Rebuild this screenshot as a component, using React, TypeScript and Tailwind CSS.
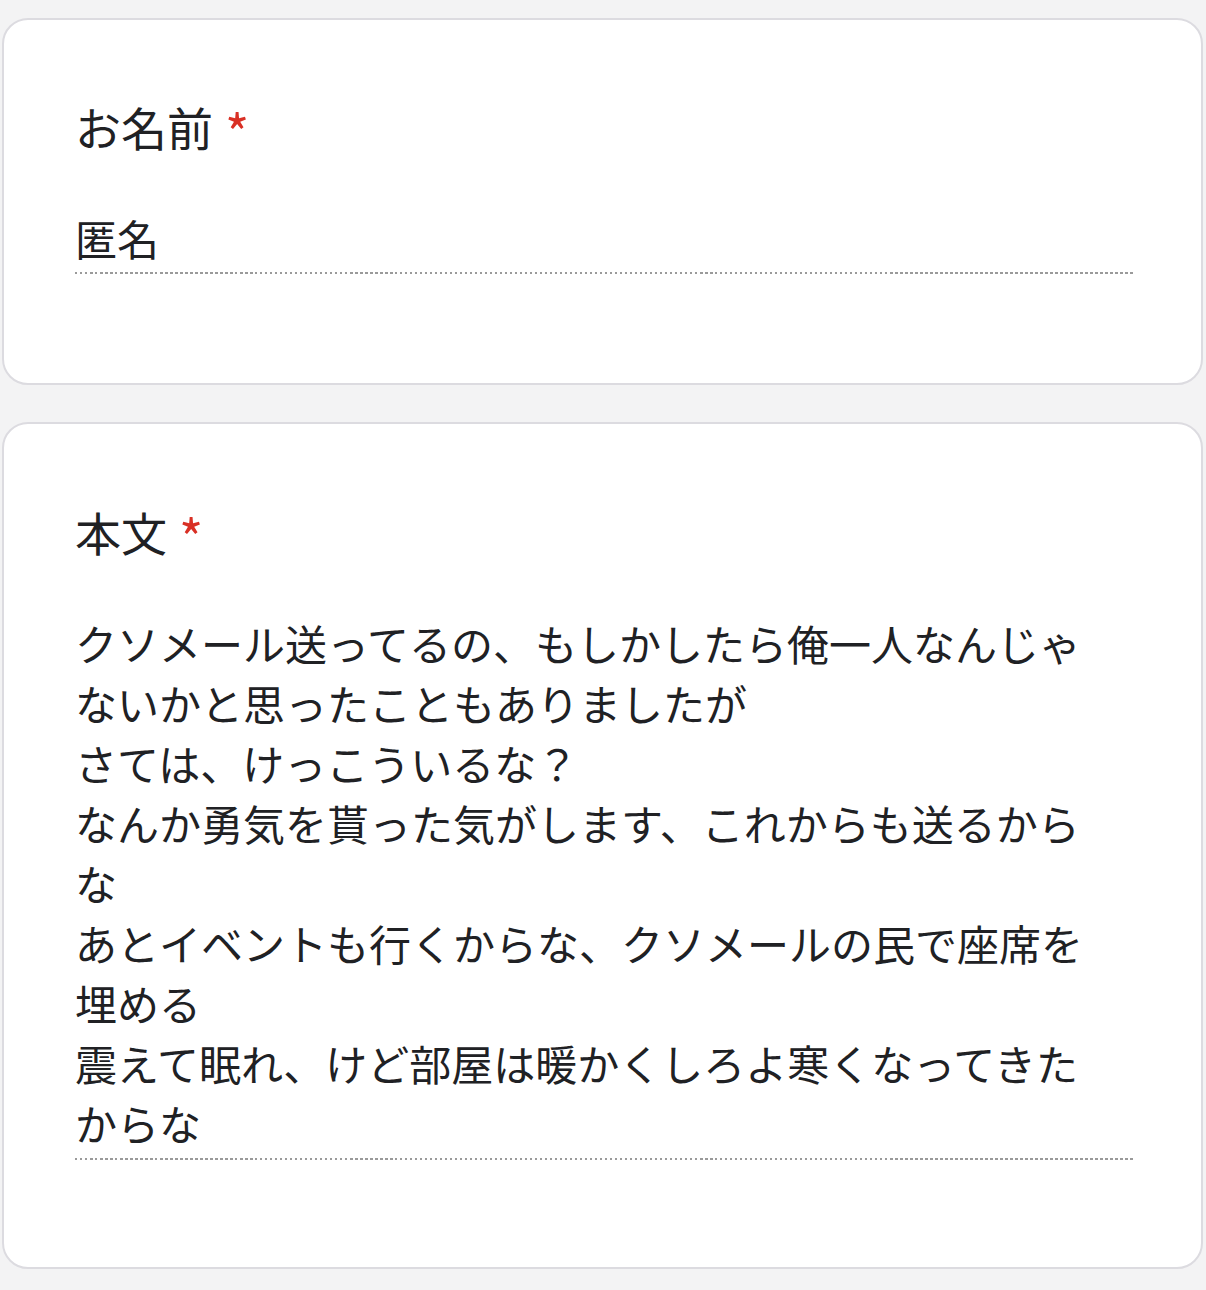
const BODY = `クソメール送ってるの、もしかしたら俺一人なんじゃないかと思ったこともありましたが
さては、けっこういるな？
なんか勇気を貰った気がします、これからも送るからな
あとイベントも行くからな、クソメールの民で座席を埋める
震えて眠れ、けど部屋は暖かくしろよ寒くなってきたからな`;

function DottedLine() {
  return (
    <div className="h-[2px] w-full bg-[repeating-linear-gradient(to_right,#9a9a9a_0_2.5px,transparent_2.5px_5px)]" />
  );
}

function Question({
  title,
  multiline,
  children,
}: {
  title: string;
  multiline?: boolean;
  children: React.ReactNode;
}) {
  return (
    <div
      className={`rounded-[26px] border-2 border-[#dcdbe0] bg-white pl-[71px] pr-[68px] ${
        multiline ? 'pt-[77px] pb-[107px]' : 'pt-[76px] pb-[109px]'
      }`}
    >
      <div className="flex h-[60px] items-start text-[46px] leading-[60px] text-[#202124]">
        <span>{title}</span>
        <span className="ml-[12px] text-[52px] leading-[70px] text-[#d93025]">*</span>
      </div>
      <div className="mt-[52px]">
        {children}
        <div className={multiline ? 'mt-[5px]' : 'mt-[4px]'}>
          <DottedLine />
        </div>
      </div>
    </div>
  );
}

export default function App() {
  return (
    <div
      className="min-h-[1290px] bg-[#f3f3f4] px-[2px] pt-[18px]"
      style={{ fontFamily: '"Noto Sans CJK JP", "Noto Sans", sans-serif' }}
    >
      <div className="flex flex-col gap-[37px] pr-[1px]">
        <Question title="お名前">
          <div className="text-[42px] leading-[60px] text-[#202124]">匿名</div>
        </Question>
        <Question title="本文" multiline>
          <div className="w-[1030px] whitespace-pre-wrap text-[42px] leading-[60px] text-[#202124]">
            {BODY}
          </div>
        </Question>
      </div>
    </div>
  );
}
